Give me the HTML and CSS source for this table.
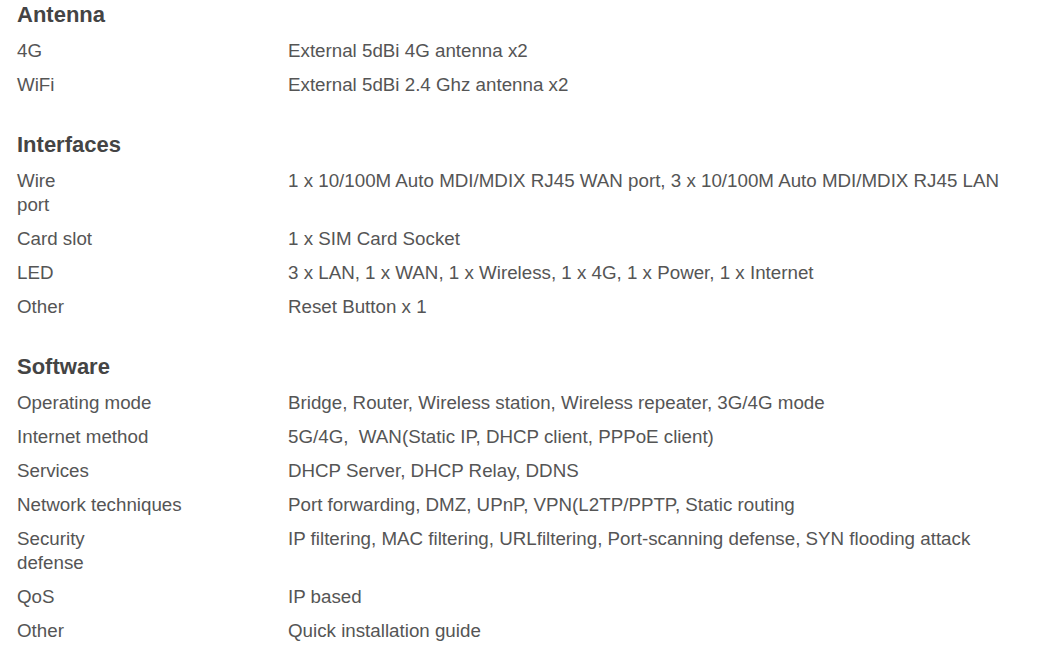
FILE: index.html
```html
<!DOCTYPE html>
<html>
<head>
<meta charset="utf-8">
<link rel="stylesheet" href="styles.css">
</head>
<body>
<div class="specs">
  <section class="group">
    <h2 class="group-title">Antenna</h2>
    <div class="row"><div class="label">4G</div><div class="value">External 5dBi 4G antenna x2</div></div>
    <div class="row"><div class="label">WiFi</div><div class="value">External 5dBi 2.4 Ghz antenna x2</div></div>
  </section>
  <section class="group">
    <h2 class="group-title">Interfaces</h2>
    <div class="row"><div class="label">Wire<br>port</div><div class="value">1 x 10/100M Auto MDI/MDIX RJ45 WAN port, 3 x 10/100M Auto MDI/MDIX RJ45 LAN</div></div>
    <div class="row"><div class="label">Card slot</div><div class="value">1 x SIM Card Socket</div></div>
    <div class="row"><div class="label">LED</div><div class="value">3 x LAN, 1 x WAN, 1 x Wireless, 1 x 4G, 1 x Power, 1 x Internet</div></div>
    <div class="row"><div class="label">Other</div><div class="value">Reset Button x 1</div></div>
  </section>
  <section class="group">
    <h2 class="group-title">Software</h2>
    <div class="row"><div class="label">Operating mode</div><div class="value">Bridge, Router, Wireless station, Wireless repeater, 3G/4G mode</div></div>
    <div class="row"><div class="label">Internet method</div><div class="value">5G/4G,&nbsp; WAN(Static IP, DHCP client, PPPoE client)</div></div>
    <div class="row"><div class="label">Services</div><div class="value">DHCP Server, DHCP Relay, DDNS</div></div>
    <div class="row"><div class="label">Network techniques</div><div class="value">Port forwarding, DMZ, UPnP, VPN(L2TP/PPTP, Static routing</div></div>
    <div class="row"><div class="label">Security<br>defense</div><div class="value">IP filtering, MAC filtering, URLfiltering, Port-scanning defense, SYN flooding attack</div></div>
    <div class="row"><div class="label">QoS</div><div class="value">IP based</div></div>
    <div class="row"><div class="label">Other</div><div class="value">Quick installation guide</div></div>
  </section>
</div>
</body>
</html>
```
FILE: styles.css
```css
html, body {
  margin: 0;
  padding: 0;
  background: #ffffff;
}
body {
  font-family: "Liberation Sans", Arial, sans-serif;
  color: #555555;
}
.specs {
  padding: 1px 17px 0;
}
.group {
  margin-bottom: 30px;
}
.group-title {
  margin: 0 0 5px 0;
  font-size: 22px;
  line-height: 27px;
  font-weight: 700;
  color: #444444;
}
.row {
  display: grid;
  grid-template-columns: 271px 1fr;
  padding: 6px 0 4px;
  font-size: 18.75px;
  line-height: 24px;
}
.label, .value {
  white-space: nowrap;
}
```
